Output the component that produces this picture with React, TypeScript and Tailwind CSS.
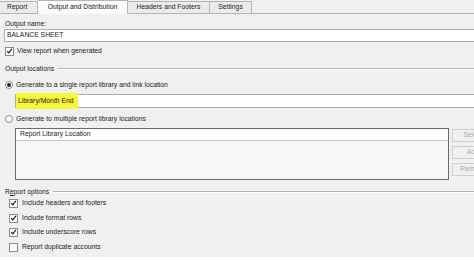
import React from 'react'

function Check({ checked }: { checked: boolean }) {
  return (
    <span className="flex h-[9px] w-[9px] shrink-0 items-center justify-center border border-[#8a8a8a] bg-white">
      {checked && (
        <svg viewBox="0 0 9 9" className="h-[8px] w-[8px]">
          <path d="M1.5 4.6 L3.6 6.8 L7.6 1.8" fill="none" stroke="#1c1c1c" strokeWidth="1.6" />
        </svg>
      )}
    </span>
  )
}

function Radio({ selected }: { selected: boolean }) {
  return (
    <span className="flex h-[8px] w-[8px] shrink-0 items-center justify-center rounded-full border border-[#8a8a8a] bg-white">
      {selected && <span className="h-[4px] w-[4px] rounded-full bg-[#2a2a2a]" />}
    </span>
  )
}

function GroupLabel({ children }: { children: React.ReactNode }) {
  return (
    <div className="flex h-[10px] items-center pl-[5px]">
      <span className="pr-[4px]">{children}</span>
      <div className="h-[2px] flex-1 border-t border-b border-t-[#b3b3b3] border-b-white" />
    </div>
  )
}

function OptionRow({ label, checked }: { label: string; checked: boolean }) {
  return (
    <div className="flex h-[10px] items-center gap-[4px] pl-[9px]">
      <Check checked={checked} />
      <span>{label}</span>
    </div>
  )
}

function DisabledButton({ label }: { label: string }) {
  return (
    <div className="flex h-[13px] w-[42px] items-center justify-center border border-[#cfcfcf] bg-[#f0f0f0] text-[#a8a8a8]">
      {label}
    </div>
  )
}

export default function App() {
  return (
    <div
      className="h-[260px] w-[474px] overflow-hidden bg-white text-[6.8px] leading-none text-[#1b1b1b]"
      style={{ fontFamily: '"Liberation Sans", Arial, sans-serif' }}
    >
      {/* Tabs */}
      <div className="flex h-[14px] items-end bg-[#f0f0f0]">
        <div className="flex h-[13px] w-[38px] shrink-0 items-center border-r border-t border-b border-[#b4b4b4] bg-[#ebebeb] pl-[7px]">
          Report
        </div>
        <div className="flex h-[14px] w-[90px] shrink-0 items-center justify-center border-t border-r border-[#b4b4b4] bg-[#fcfcfc]">
          Output and Distribution
        </div>
        <div className="flex h-[13px] w-[82px] shrink-0 items-center justify-center border-r border-t border-b border-[#b4b4b4] bg-[#ebebeb]">
          Headers and Footers
        </div>
        <div className="flex h-[13px] w-[42px] shrink-0 items-center justify-center border-r border-t border-b border-[#b4b4b4] bg-[#ebebeb]">
          Settings
        </div>
        <div className="h-[1px] flex-1 bg-[#b4b4b4]" />
      </div>

      {/* Content */}
      <div className="h-[243px] overflow-hidden bg-[#f0f0f0]">
        <div className="h-[5px]" />
        <div className="flex h-[10px] items-center pl-[5px]">Output name:</div>
        <div className="ml-[4px] flex h-[13px] items-center border-t border-b border-l border-[#abadb3] bg-white pl-[2px]">
          BALANCE SHEET
        </div>
        <div className="flex h-[14px] items-center gap-[3px] pl-[5px] pt-[4px]">
          <Check checked />
          <span>View report when generated</span>
        </div>
        <div className="h-[8px]" />
        <GroupLabel>Output locations</GroupLabel>
        <div className="h-[6px]" />
        <div className="flex h-[10px] items-center gap-[3px] pl-[5px]">
          <Radio selected />
          <span>Generate to a single report library and link location</span>
        </div>
        <div className="h-[4px]" />
        <div className="ml-[15px] flex h-[14px] items-center border-t border-b border-l border-[#abadb3] bg-white">
          <span className="flex h-[16px] w-[62px] items-center bg-[#f6f63a] pl-[2px]">Library/Month End</span>
        </div>
        <div className="h-[6px]" />
        <div className="flex h-[10px] items-center gap-[3px] pl-[5px]">
          <Radio selected={false} />
          <span>Generate to multiple report library locations</span>
        </div>
        <div className="h-[4px]" />
        <div className="flex h-[52px] gap-[3px] overflow-hidden pl-[15px]">
          <div className="flex w-[434px] shrink-0 flex-col border border-[#6b6b6b] bg-[#f7f7f7]">
            <div className="flex h-[12px] items-center border-b border-[#c9c9c9] bg-white pl-[4px]">
              Report Library Location
            </div>
          </div>
          <div className="flex shrink-0 flex-col gap-[4px] pt-[1px]">
            <DisabledButton label="Select" />
            <DisabledButton label="Add" />
            <DisabledButton label="Remove" />
          </div>
        </div>
        <div className="h-[7px]" />
        <GroupLabel>
          R<span className="underline">e</span>port options
        </GroupLabel>
        <div className="h-[1px]" />
        <OptionRow label="Include headers and footers" checked />
        <div className="h-[5px]" />
        <OptionRow label="Include format rows" checked />
        <div className="h-[4px]" />
        <OptionRow label="Include underscore rows" checked />
        <div className="h-[5px]" />
        <OptionRow label="Report duplicate accounts" checked={false} />
      </div>
    </div>
  )
}
